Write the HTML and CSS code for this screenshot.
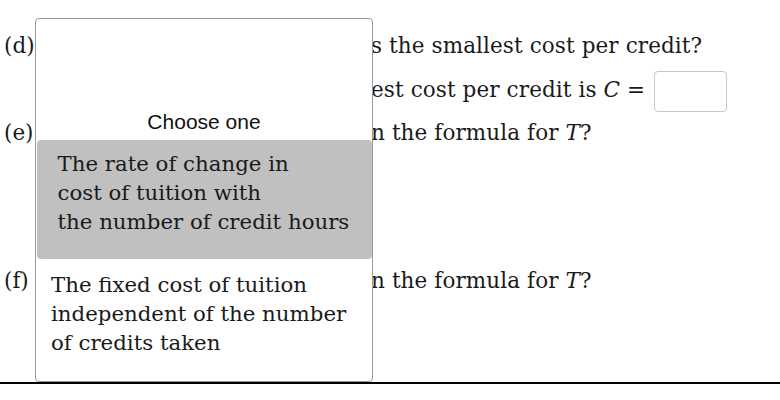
FILE: index.html
```html
<!DOCTYPE html>
<html>
<head>
<meta charset="utf-8">
<link rel="stylesheet" href="styles.css">
</head>
<body>
<div class="page">
  <div class="questions">
    <div class="row"><span class="label">(d)</span><span class="text">s the smallest cost per credit?</span></div>
    <div class="row"><span class="label"></span><span class="text">est cost per credit is <i>C</i> = <span class="answer"></span></span></div>
    <div class="row"><span class="label">(e)</span><span class="text">n the formula for <i>T</i>?</span></div>
    <div class="row row-f"><span class="label">(f)</span><span class="text">n the formula for <i>T</i>?</span></div>
  </div>
  <div class="rule"></div>

  <div class="popup">
    <div class="popup-head">Choose one</div>
    <div class="option option-selected">
      <span class="line">The rate of change in</span>
      <span class="line">cost of tuition with</span>
      <span class="line">the number of credit hours</span>
    </div>
    <div class="option option-plain">
      <span class="line">The fixed cost of tuition</span>
      <span class="line">independent of the number</span>
      <span class="line">of credits taken</span>
    </div>
  </div>
</div>
</body>
</html>
```
FILE: styles.css
```css
html, body {
  margin: 0;
  padding: 0;
  background: #ffffff;
}

.page {
  position: relative;
  width: 780px;
  height: 400px;
  overflow: hidden;
  font-family: "DejaVu Serif", serif;
  font-size: 21.5px;
  color: #1a1a1a;
}

.questions {
  padding-top: 24px;
}

.row {
  display: grid;
  grid-template-columns: 371px 1fr;
  line-height: 43.5px;
  height: 43.5px;
}

.row-f {
  margin-top: 104.5px;
}

.label {
  padding-left: 4px;
}

.text {
  white-space: nowrap;
  letter-spacing: 0.1px;
}

.text i {
  font-style: italic;
}

.answer {
  display: inline-block;
  box-sizing: border-box;
  width: 73px;
  height: 41px;
  margin-left: 2px;
  border: 1.5px solid #c8c8c8;
  border-radius: 4px;
  vertical-align: -15px;
  background: #ffffff;
}

.rule {
  margin-top: 79.5px;
  height: 2px;
  background: #000000;
}

.popup {
  position: absolute;
  left: 35px;
  top: 18px;
  width: 338px;
  height: 364px;
  box-sizing: border-box;
  border: 1.5px solid #9a9a9a;
  border-radius: 4px;
  background: #ffffff;
  display: flex;
  flex-direction: column;
}

.popup-head {
  font-family: "Liberation Sans", Arial, sans-serif;
  font-size: 21px;
  line-height: 24px;
  text-align: center;
  padding-top: 91px;
  padding-bottom: 6px;
  color: #111111;
}

.option {
  display: flex;
  flex-direction: column;
  font-size: 21.3px;
  line-height: 29px;
  border-radius: 4px;
}

.line {
  display: block;
  white-space: nowrap;
}

.option-selected {
  background: #c0c0c0;
  padding: 9px 10px 23px 21px;
  margin: 0 0.5px;
}

.option-plain {
  padding: 11px 10px 19px 15px;
}
```
